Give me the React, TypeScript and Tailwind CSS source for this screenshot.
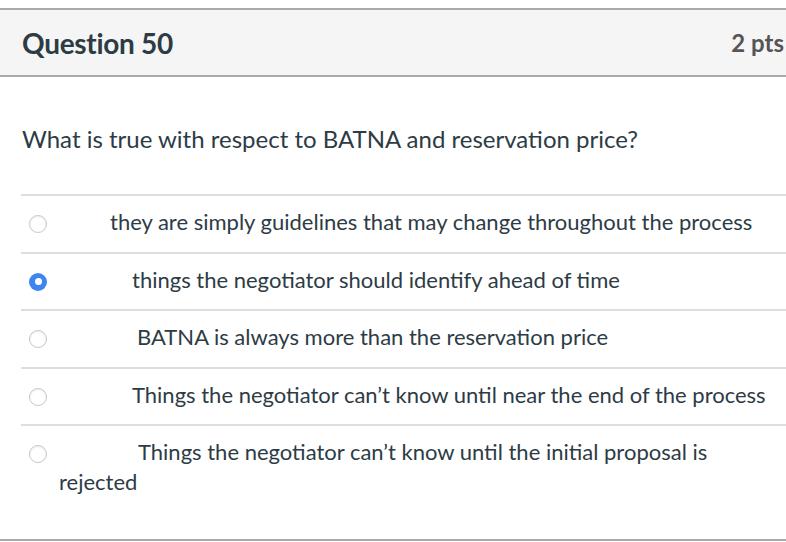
import React from 'react';

const answers = [
  { text: 'they are simply guidelines that may change throughout the process', indent: 'indent-[51px]', checked: false },
  { text: 'things the negotiator should identify ahead of time', indent: 'indent-[73px]', checked: true },
  { text: 'BATNA is always more than the reservation price', indent: 'indent-[78px]', checked: false },
  { text: 'Things the negotiator can\u2019t know until near the end of the process', indent: 'indent-[73px]', checked: false },
  { text: 'Things the negotiator can\u2019t know until the initial proposal is rejected', indent: 'indent-[79px]', checked: false },
];

const Radio = ({ checked }: { checked: boolean }) =>
  checked ? (
    <span className="mt-[8px] flex h-[18px] w-[18px] shrink-0 items-center justify-center rounded-full bg-[#3d86f1]">
      <span className="h-[7px] w-[7px] rounded-full bg-white" />
    </span>
  ) : (
    <span className="mt-[8px] h-[18px] w-[18px] shrink-0 rounded-full border border-[#c8c8c8] bg-white shadow-[inset_0_1px_2px_rgba(0,0,0,0.08)]" />
  );

export default function App() {
  return (
    <div className="min-h-[542px] bg-white pt-2 text-[#2d3b45]" style={{ fontFamily: 'Lato, "Open Sans", sans-serif' }}>
      {/* Header */}
      <div className="flex h-[69px] items-center justify-between border-y-2 border-[#a9a9a9] bg-[#f5f5f5] pl-[22px] pr-[2px]">
        <h2 className="text-[28px] font-bold tracking-[-0.3px]">Question 50</h2>
        <span className="text-[24px] font-bold text-[#555]">2 pts</span>
      </div>

      {/* Question */}
      <p className="mt-[47px] pl-[22px] text-[24px] leading-[30px]">
        What is true with respect to BATNA and reservation price?
      </p>

      {/* Answers */}
      <div className="ml-[21px] mt-[40px]">
        {answers.map((a, i) => (
          <div key={i} className="flex items-start border-t-2 border-[#dedede] pb-[15px] pl-[8px] pt-[11px]">
            <Radio checked={a.checked} />
            <div className={`ml-[12px] flex-1 text-[22px] leading-[29.5px] ${a.indent}`}>{a.text}</div>
          </div>
        ))}
      </div>

      <div className="mt-[28px] border-t-2 border-[#a9a9a9]" />
    </div>
  );
}
